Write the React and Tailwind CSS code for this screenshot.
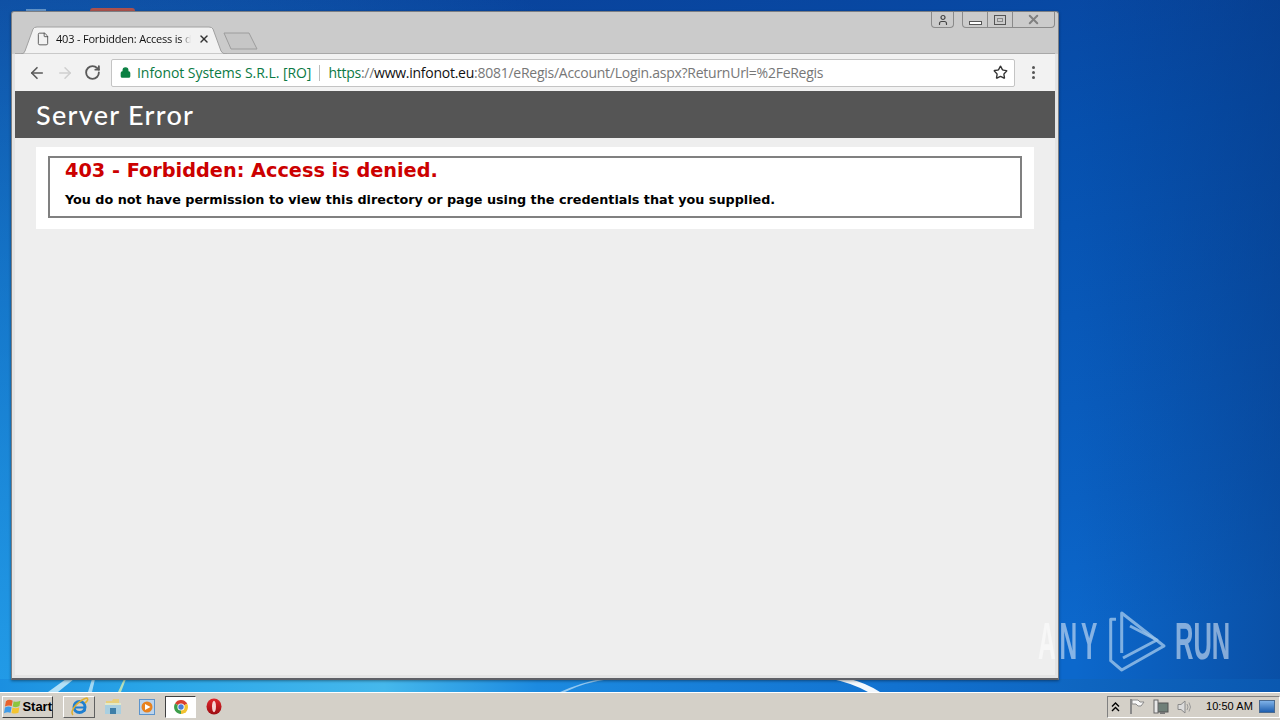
import { ArrowLeft, ArrowRight, RotateCw, Star, Lock, X, File, User } from "lucide-react";

const uiFont = "font-['Open_Sans','Noto_Sans',sans-serif]";

function StartFlag() {
  return (
    <svg width="18" height="18" viewBox="0 0 18 18">
      <path d="M2 3 Q5 0.5 9 2.5 L8 8 Q5 6.5 1 8.5 Z" fill="#e8622c" />
      <path d="M10 3 Q13 4.5 17 2.5 L16 8 Q13 10 9 8.5 Z" fill="#8cc63f" />
      <path d="M1 9.5 Q4.5 7.5 7.8 9.2 L6.8 15 Q3.5 13.5 0 15.5 Z" fill="#3f9be8" />
      <path d="M8.8 9.5 Q12 11 15.8 9.2 L15 15 Q12 16.5 7.8 15.2 Z" fill="#f4c430" />
    </svg>
  );
}

function IeIcon() {
  return (
    <svg width="19" height="19" viewBox="0 0 19 19">
      <circle cx="9.5" cy="10" r="5.5" fill="none" stroke="#1f7fd0" strokeWidth="3" />
      <path d="M5 10.5 H15" stroke="#1f7fd0" strokeWidth="2" />
      <path d="M13 13 H16 L15 15 H12 Z" fill="#1f7fd0" />
      <path d="M3 18 Q0 15 6 8 Q12 2 17 1 Q19 3 15 6" fill="none" stroke="#e0b030" strokeWidth="1.6" />
    </svg>
  );
}

function FolderIcon() {
  return (
    <svg width="18" height="17" viewBox="0 0 18 17">
      <path d="M2 3 H8 L9 1 H15 V6 H2 Z" fill="#e8cf7c" />
      <rect x="1" y="5" width="16" height="11" fill="#a9cfe0" />
      <rect x="6" y="10" width="6" height="6" fill="#3f7fa8" />
      <rect x="1" y="5" width="16" height="2" fill="#e2e8c8" />
    </svg>
  );
}

function MediaIcon() {
  return (
    <svg width="16" height="16" viewBox="0 0 16 16">
      <rect x="0.5" y="0.5" width="15" height="15" fill="#bcd4ec" stroke="#5c94cc" />
      <circle cx="8" cy="8" r="5.5" fill="#e8821e" />
      <path d="M6 5 L11.5 8 L6 11 Z" fill="#fff" />
    </svg>
  );
}

function ChromeIcon() {
  return (
    <svg width="16" height="16" viewBox="0 0 16 16">
      <path d="M8 8 L2 4.5 A7 7 0 0 1 14.2 4.8 Z" fill="#d8402f" />
      <path d="M8 8 L14.2 4.8 A7 7 0 0 1 8 15 Z" fill="#f2c230" />
      <path d="M8 8 L8 15 A7 7 0 0 1 2 4.5 Z" fill="#3d9e4a" />
      <circle cx="8" cy="8" r="3.6" fill="#fff" />
      <circle cx="8" cy="8" r="2.7" fill="#4a7fd8" />
    </svg>
  );
}

function OperaIcon() {
  return (
    <svg width="16" height="17" viewBox="0 0 16 17">
      <defs>
        <linearGradient id="operaRed" x1="0" y1="0" x2="0" y2="1">
          <stop offset="0" stopColor="#e0262c" />
          <stop offset="1" stopColor="#9c0d12" />
        </linearGradient>
      </defs>
      <ellipse cx="8" cy="8.5" rx="7.5" ry="8" fill="url(#operaRed)" />
      <ellipse cx="8" cy="8.5" rx="2" ry="5.8" fill="#f6d4d4" />
    </svg>
  );
}

function TrayIcons() {
  return (
    <>
      <svg width="9" height="10" viewBox="0 0 9 10" fill="none" stroke="#000" strokeWidth="1.4">
        <path d="M1 4.5 L4.5 1 L8 4.5" />
        <path d="M1 9 L4.5 5.5 L8 9" />
      </svg>
      <svg width="16" height="17" viewBox="0 0 16 17" className="ml-[9px]">
        <path d="M2 1 V16" stroke="#8a8a8a" strokeWidth="2" />
        <path d="M3 2 H9 L11 4 H15 L12 8 H9 L7 6 H3 Z" fill="#f8f8f8" stroke="#8a8a8a" />
      </svg>
      <svg width="17" height="16" viewBox="0 0 17 16" className="ml-[7px]">
        <rect x="5" y="4" width="11" height="9" fill="#6f7f78" stroke="#555" />
        <rect x="8" y="13" width="5" height="2" fill="#777" />
        <rect x="2" y="1" width="4" height="13" fill="#e8e8e8" stroke="#666" />
      </svg>
      <svg width="16" height="16" viewBox="0 0 16 16" className="ml-[8px]">
        <path d="M1 5.5 H4 L8 2 V14 L4 10.5 H1 Z" fill="#dcdcdc" stroke="#8a8a8a" />
        <path d="M10 5 Q12 8 10 11 M12 3.5 Q15 8 12 12.5" fill="none" stroke="#9a9a9a" />
      </svg>
    </>
  );
}

function AnyRunLogo() {
  return (
    <div className="absolute left-[1038px] top-[610px] flex items-center text-white/50 font-['Liberation_Sans',sans-serif] font-bold text-[51px] leading-none">
      <div className="w-[70px]">
        <span className="inline-block origin-left scale-x-[0.48] tracking-[8px]">ANY</span>
      </div>
      <svg width="60" height="62" viewBox="0 0 60 62" fill="none" stroke="#9cc4ea" strokeOpacity="0.8" strokeWidth="3" strokeLinejoin="round">
        <path d="M13.7 43 V3 L56 36 L13.7 60 L2.7 50.7 V9.3 H8" />
        <path d="M22 16 L49 30 L15 48" />
      </svg>
      <div className="ml-[7px] w-[56px]">
        <span className="inline-block origin-left scale-x-[0.5]">RUN</span>
      </div>
    </div>
  );
}

function Wallpaper() {
  return (
    <>
      <div className="absolute left-[26px] top-[9px] w-[20px] h-[2px] bg-[#6f8fc0]" />
      <div className="absolute left-[90px] top-[8px] w-[45px] h-[3px] rounded-t-[3px] bg-[#c8402c]" />
      <div className="absolute inset-0 bg-[radial-gradient(circle_at_0%_100%,rgba(40,170,240,0.8),transparent_60%)]" />
      <div className="absolute inset-0 bg-[linear-gradient(90deg,transparent_84%,rgba(6,50,120,0.45)_100%)]" />
      <svg width="1280" height="13" viewBox="0 0 1280 13" className="absolute left-0 bottom-0">
        <defs>
          <linearGradient id="wallBand" x1="0" y1="0" x2="1" y2="0">
            <stop offset="0" stopColor="#1b8fe0" />
            <stop offset="0.12" stopColor="#2aa6e8" />
            <stop offset="0.3" stopColor="#45b8ec" />
            <stop offset="0.42" stopColor="#1c8ae0" />
            <stop offset="0.7" stopColor="#1272d0" />
            <stop offset="1" stopColor="#0a58b0" />
          </linearGradient>
        </defs>
        <rect width="1280" height="13" fill="url(#wallBand)" />
        <path d="M48 13 L66 0 H74 L58 13 Z" fill="#d8f2fb" fillOpacity="0.8" />
        <path d="M88 13 L92 0 H95 L92 13 Z" fill="#d8f2fb" fillOpacity="0.7" />
        <path d="M118 13 L124 0 H126 L121 13 Z" fill="#d8efb0" fillOpacity="0.8" />
        <path d="M565 13 Q585 3 610 0 H600 Q580 4 560 13 Z" fill="#e4f4fb" fillOpacity="0.6" />
        <path d="M832 0 H850 Q866 4 880 13 H868 Q852 4 832 0 Z" fill="#ffffff" fillOpacity="0.95" />
      </svg>
    </>
  );
}

export default function App() {
  return (
    <div className="relative w-[1280px] h-[720px] overflow-hidden flex flex-col">
      {/* desktop */}
      <div className="relative h-[692px] pl-[11px] pt-[11px] bg-[linear-gradient(170deg,#0a3f96_0%,#0650ae_35%,#0a60c2_75%,#0c68cc_90%)]">
        <Wallpaper />

        {/* browser window */}
        <div className="relative w-[1048px] h-[669px] flex flex-col rounded-t-[3px] border border-[#7c7f84] border-b-2 border-b-[#5e6066] bg-[linear-gradient(180deg,#cbcbcb_42px,#e4e4e4_42px)] px-[3px] pb-[3px] shadow-[0_1px_3px_rgba(0,0,0,0.4)]">
          {/* tab strip */}
          <div className="relative h-[41px] shrink-0">
            <div className="absolute right-0 top-0 flex items-start">
              <div className="w-[23px] h-[16px] flex items-center justify-center rounded-b-[4px] border border-t-0 border-[#8a8a8a] mr-[8px]">
                <User size={12} strokeWidth={2.4} className="text-[#444]" />
              </div>
              <div className="flex h-[16px] rounded-b-[4px] border border-t-0 border-[#8a8a8a]">
                <div className="w-[25px] flex items-end justify-center pb-[2px] border-r border-[#8a8a8a]">
                  <div className="w-[13px] h-[4px] border border-[#555] bg-white" />
                </div>
                <div className="w-[25px] flex items-center justify-center border-r border-[#8a8a8a]">
                  <div className="w-[12px] h-[10px] border border-[#555] flex items-center justify-center">
                    <div className="w-[6px] h-[4px] border border-[#888]" />
                  </div>
                </div>
                <div className="w-[41px] flex items-center justify-center">
                  <X size={15} strokeWidth={3.2} className="text-[#808080]" />
                </div>
              </div>
            </div>

            <div className="absolute left-[6px] bottom-[-1px] w-[206px] h-[28px]">
              <svg width="206" height="28" viewBox="0 0 206 28" className="absolute inset-0">
                <path d="M0 28 Q3 28 4 25 L12 3 Q13 1 16 1 H188 Q191 1 192 3 L200 25 Q201 28 206 28 Z" fill="#f2f2f2" stroke="#a0a0a0" />
              </svg>
              <div className={`relative h-full flex items-center pl-[15px] pb-[2px] ${uiFont}`}>
                <File size={14} strokeWidth={1.4} className="text-[#444] shrink-0" />
                <span className="ml-[6px] w-[135px] whitespace-nowrap text-[11px] tracking-[-0.2px] text-[#111] [mask-image:linear-gradient(90deg,#000_92%,transparent)]">
                  403 - Forbidden: Access is d
                </span>
                <X size={12} strokeWidth={2.8} className="ml-[7px] text-[#333] shrink-0" />
              </div>
            </div>
            <svg width="36" height="18" viewBox="0 0 36 18" className="absolute left-[208px] top-[20px]">
              <path d="M1 1 H26 L34 17 H8 Z" fill="#c6c6c6" stroke="#9c9c9c" strokeLinejoin="round" />
            </svg>
          </div>

          {/* toolbar */}
          <div className="h-[38px] shrink-0 flex items-center bg-[#f2f2f2] border-t border-[#a8a8a8]">
            <ArrowLeft size={18} strokeWidth={2.2} className="ml-[13px] text-[#5a5a5a]" />
            <ArrowRight size={18} strokeWidth={2} className="ml-[10px] text-[#cfcfcf]" />
            <RotateCw size={17} strokeWidth={2.6} className="ml-[10px] text-[#5a5a5a]" />
            <div className={`ml-[10px] w-[904px] h-[28px] flex items-center rounded-[2px] border border-[#c4c4c4] bg-white text-[14px] whitespace-nowrap ${uiFont}`}>
              <Lock size={11} strokeWidth={3} fill="currentColor" className="ml-[8px] text-[#0b8043] shrink-0" />
              <span className="ml-[6px] tracking-[-0.05px] text-[#0b7a44]">Infonot Systems S.R.L. [RO]</span>
              <span className="ml-[8px] mr-[8px] w-px h-[16px] bg-[#bdbdbd]" />
              <span className="tracking-[-0.26px]">
                <span className="text-[#0b7a44]">https</span>
                <span className="text-[#777]">://</span>
                <span className="text-[#111]">www.infonot.eu</span>
                <span className="text-[#777]">:8081/eRegis/Account/Login.aspx?ReturnUrl=%2FeRegis</span>
              </span>
              <Star size={15} strokeWidth={2.2} className="ml-auto mr-[6px] text-[#333]" />
            </div>
            <div className="ml-[17px] flex flex-col gap-[2px]">
              <div className="w-[3px] h-[3px] rounded-full bg-[#555]" />
              <div className="w-[3px] h-[3px] rounded-full bg-[#555]" />
              <div className="w-[3px] h-[3px] rounded-full bg-[#555]" />
            </div>
          </div>

          {/* page */}
          <div className="flex-1 bg-[#eeeeee] font-['DejaVu_Sans',sans-serif]">
            <div className="h-[47px] bg-[#555555] flex items-center pl-[21px]">
              <span className="text-white text-[27px] leading-none tracking-[1.3px] font-medium font-['Lato',sans-serif]">Server Error</span>
            </div>
            <div className="mt-[9px] mx-[21px] px-[12px] pt-[9px] pb-[11px] bg-white">
              <div className="h-[62px] border-2 border-[#808080] pl-[15px] pt-px">
                <h1 className="text-[19.3px] leading-[24px] font-bold text-[#cc0000]">403 - Forbidden: Access is denied.</h1>
                <p className="mt-[9px] text-[12.77px] leading-[16px] font-bold text-black whitespace-nowrap">You do not have permission to view this directory or page using the credentials that you supplied.</p>
              </div>
            </div>
          </div>
        </div>
      </div>

      {/* taskbar */}
      <div className="h-[28px] shrink-0 flex items-center bg-[#d4d0c8] border-t border-white font-['Liberation_Sans',sans-serif]">
        <div className="ml-[2px] w-[51px] h-[22px] flex items-center pl-[1px] gap-[1px] bg-[#d4d0c8] border border-t-white border-l-white border-r-[#404040] border-b-[#404040] text-[13px] font-bold text-black">
          <StartFlag />
          <span>Start</span>
        </div>
        <div className="ml-[10px] w-[32px] h-[22px] flex items-center justify-center border border-t-white border-l-white border-r-[#606060] border-b-[#606060]">
          <IeIcon />
        </div>
        <div className="ml-[6px] w-[24px] flex justify-center"><FolderIcon /></div>
        <div className="ml-[10px] w-[24px] flex justify-center"><MediaIcon /></div>
        <div className="ml-[6px] w-[31px] h-[22px] flex items-center justify-center bg-white border border-t-[#404040] border-l-[#404040] border-r-white border-b-white">
          <ChromeIcon />
        </div>
        <div className="ml-[10px] flex"><OperaIcon /></div>

        <div className="ml-auto w-[173px] h-[22px] flex items-center pl-[3px] border border-t-[#808080] border-l-[#808080] border-r-white border-b-white">
          <TrayIcons />
          <span className="ml-[13px] text-[11px] tracking-[0.05px] text-black whitespace-nowrap">10:50 AM</span>
          <div className="ml-[6px] w-[16px] h-[13px] bg-[linear-gradient(180deg,#7fb2e8,#1f5fb0)] border border-[#4a6a90]" />
        </div>
      </div>

      <AnyRunLogo />
    </div>
  );
}
